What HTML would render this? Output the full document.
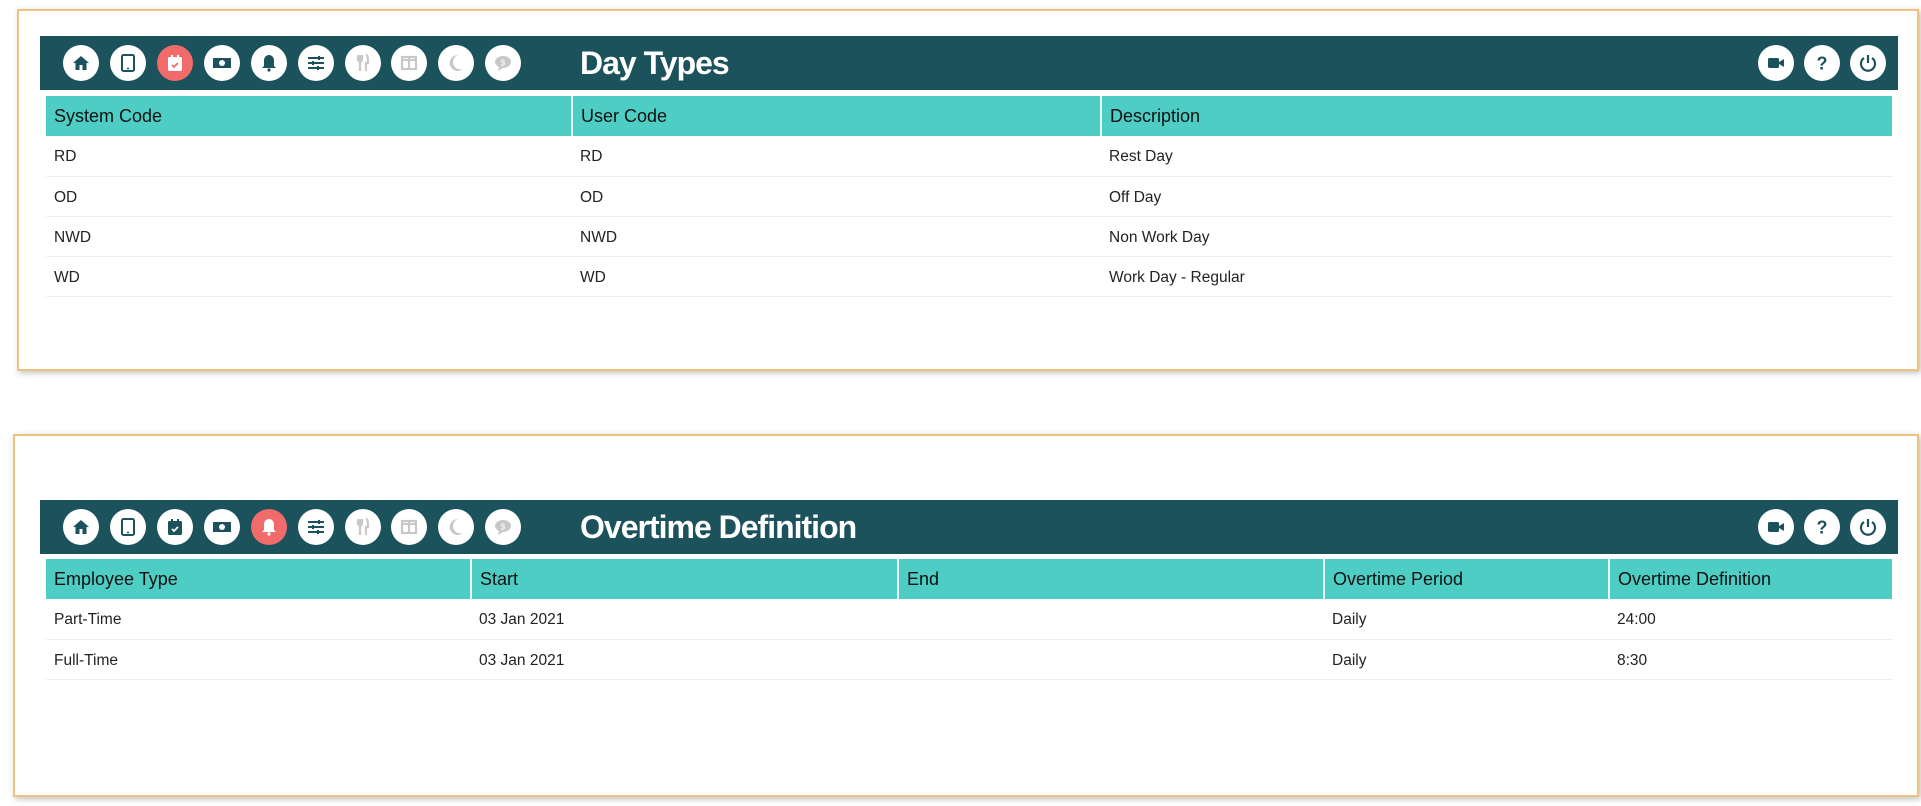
<!DOCTYPE html>
<html><head><style>
body{margin:0;width:1921px;height:806px;background:#fff;position:relative;overflow:hidden;font-family:"Liberation Sans",sans-serif;}
.panel{position:absolute;border:2px solid #ecc27f;background:#fff;box-shadow:2px 2px 6px rgba(0,0,0,.25);box-sizing:border-box;}
.bar{position:absolute;background:#1b525c;height:54px;}
.ic{position:absolute;width:36px;height:36px;border-radius:50%;background:#fff;top:9px;}
.ic svg{position:absolute;left:8px;top:8px;width:20px;height:20px;}
.title{position:absolute;top:8px;color:#fff;font-size:32px;font-weight:bold;letter-spacing:-1px;}
table{position:absolute;border-collapse:collapse;font-size:15.5px;color:#222;}
th{background:#4ecdc4;text-align:left;font-weight:normal;font-size:18px;height:40px;padding:0 0 0 8px;border-left:2px solid #e8f8f7;color:#111;}
th:first-child{border-left:none}
td{height:40px;padding:3px 0 0 8px;border-bottom:1px solid #eee;box-sizing:border-box;}
</style></head><body>

<div class="panel" style="left:17px;top:9px;width:1902px;height:362px"></div>
<div class="bar" style="left:40px;top:36px;width:1858px"></div>
<div class="panel" style="left:13px;top:434px;width:1906px;height:363px"></div>
<div class="bar" style="left:40px;top:500px;width:1858px"></div>

<script>
function icons(top,active,title){
 const xs=[81,128,175,222,269,316,363,409,456,503];
 const d='#1b525c',g='#c8c8c8';
 const sv=[
 c=>`<path d="M10 3L2 10h2.5v7h4v-5h3v5h4v-7H18z" fill="${c}"/>`,
 c=>`<rect x="4" y="2" width="12" height="16" rx="1.5" fill="none" stroke="${c}" stroke-width="2"/><circle cx="10" cy="15.5" r="1" fill="${c}"/>`,
 c=>`<rect x="3" y="4" width="14" height="14" rx="1.5" fill="${c}"/><rect x="6" y="2" width="2" height="4" fill="${c}"/><rect x="12" y="2" width="2" height="4" fill="${c}"/><path d="M7 12l2 2 4-4" stroke="${c==='#fff'?'#f26b6b':'#fff'}" stroke-width="1.8" fill="none"/>`,
 c=>`<rect x="1" y="5" width="18" height="10" fill="${c}"/><circle cx="10" cy="10" r="3" fill="#fff"/>`,
 c=>`<path d="M10 2c-3 0-5 2.5-5 5.5V13l-2 2h14l-2-2V7.5C15 4.5 13 2 10 2z" fill="${c}"/><circle cx="10" cy="17" r="1.6" fill="${c}"/>`,
 c=>`<path d="M2 5h16M2 10h16M2 15h16" stroke="${c}" stroke-width="2"/><rect x="12" y="3" width="2" height="4" fill="${c}"/><rect x="6" y="8" width="2" height="4" fill="${c}"/><rect x="11" y="13" width="2" height="4" fill="${c}"/>`,
 c=>`<path d="M5 2v6M7 2v16M9 2v6M5 8h4M13 2c2 0 2 5 2 8h-2v8" stroke="${c}" stroke-width="2.2" fill="none"/>`,
 c=>`<rect x="3" y="4" width="14" height="12" fill="none" stroke="${c}" stroke-width="2.2"/><path d="M10 4v12M3 7h14" stroke="${c}" stroke-width="2"/>`,
 c=>`<path d="M12 2a8 8 0 1 0 5 14A7 7 0 0 1 12 2z" fill="${c}"/>`,
 c=>`<path d="M10 3c4.5 0 8 2.6 8 6s-3.5 6-8 6l-5 3 1-4c-2-1-4-3-4-5 0-3.4 3.5-6 8-6z" fill="${c}"/><text x="10" y="12.5" font-size="8" fill="#fff" text-anchor="middle" font-family="Liberation Sans">$</text>`
 ];
 let h='';
 xs.forEach((x,i)=>{
  const act=i===active;
  const col=act?'#fff':(i>=6?g:d);
  h+=`<div class="ic" style="left:${x-18}px;top:${top+9}px;${act?'background:#f26b6b':''}"><svg viewBox="0 0 20 20">${sv[i](col)}</svg></div>`;
 });
 const rs=[
 `<rect x="2" y="5" width="11" height="10" rx="1.5" fill="${d}"/><path d="M13 9l5-3v8l-5-3z" fill="${d}"/>`,
 `<text x="10" y="16.5" font-size="18" font-weight="bold" fill="${d}" text-anchor="middle" font-family="Liberation Sans">?</text>`,
 `<path d="M6 5a7 7 0 1 0 8 0" stroke="${d}" stroke-width="2.2" fill="none"/><path d="M10 2v8" stroke="${d}" stroke-width="2.2"/>`
 ];
 [1776,1822,1868].forEach((x,i)=>{h+=`<div class="ic" style="left:${x-18}px;top:${top+9}px"><svg viewBox="0 0 20 20">${rs[i]}</svg></div>`;});
 h+=`<div class="title" style="left:580px;top:${top+9}px">${title}</div>`;
 document.write(h);
}
icons(36,2,'Day Types');
icons(500,4,'Overtime Definition');
</script>

<table style="left:46px;top:96px;width:1846px">
<tr><th style="width:517px">System Code</th><th style="width:519px">User Code</th><th>Description</th></tr>
<tr><td>RD</td><td>RD</td><td>Rest Day</td></tr>
<tr><td>OD</td><td>OD</td><td>Off Day</td></tr>
<tr><td>NWD</td><td>NWD</td><td>Non Work Day</td></tr>
<tr><td>WD</td><td>WD</td><td>Work Day - Regular</td></tr>
</table>

<table style="left:46px;top:559px;width:1846px">
<tr><th style="width:416px">Employee Type</th><th style="width:417px">Start</th><th style="width:416px">End</th><th style="width:275px">Overtime Period</th><th>Overtime Definition</th></tr>
<tr><td>Part-Time</td><td>03 Jan 2021</td><td></td><td>Daily</td><td>24:00</td></tr>
<tr><td>Full-Time</td><td>03 Jan 2021</td><td></td><td>Daily</td><td>8:30</td></tr>
</table>
</body></html>
